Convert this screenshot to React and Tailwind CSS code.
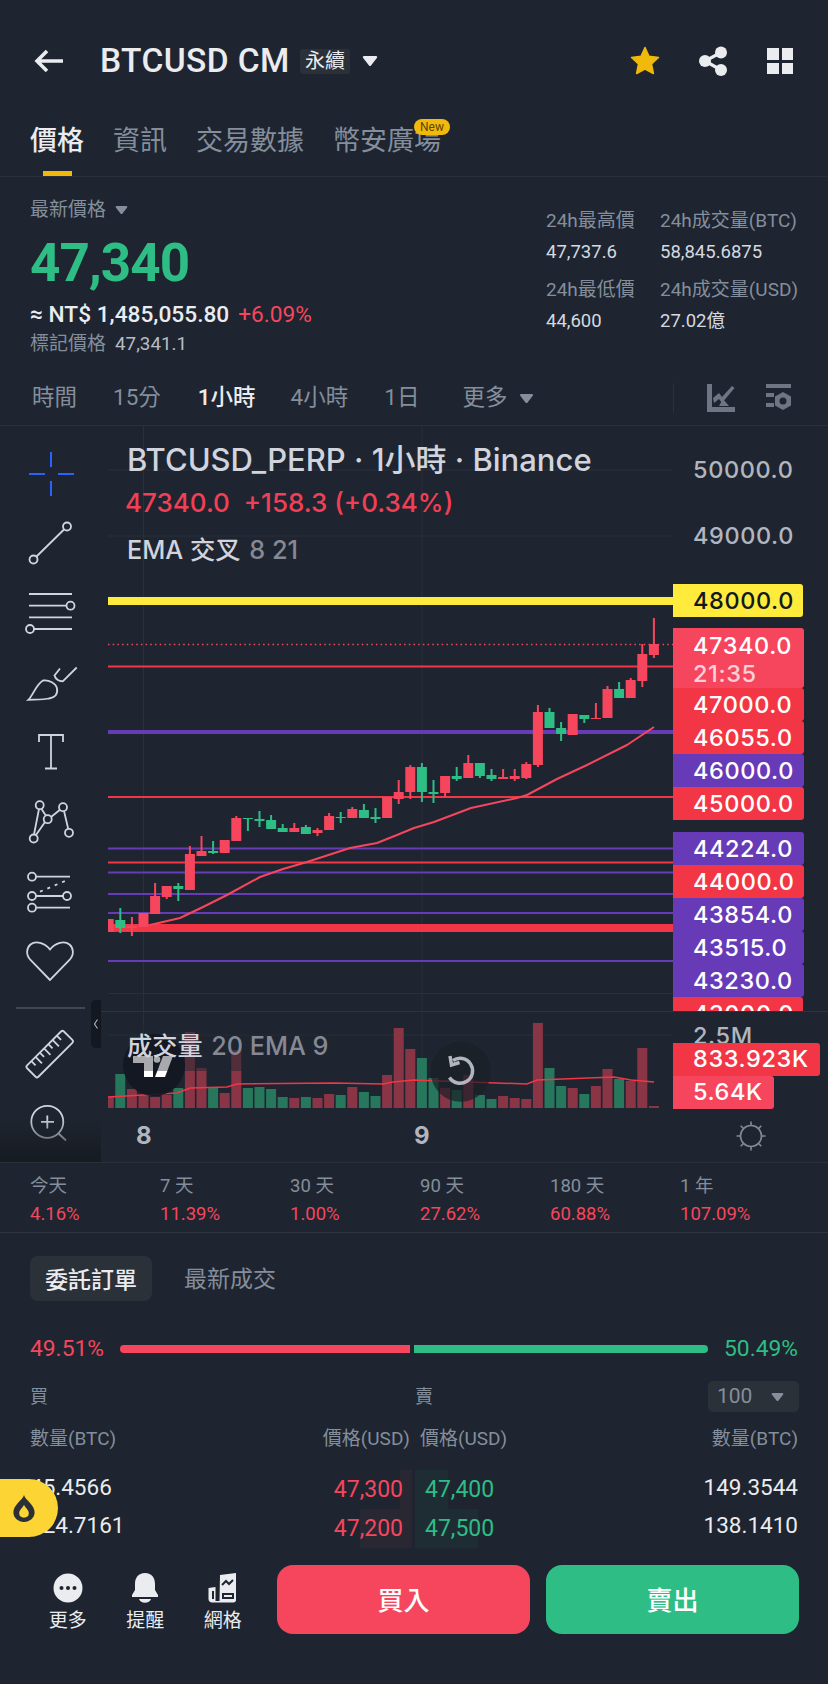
import React from 'react';

const RED = '#f6465d';
const GREEN = '#2ebd85';
const LINE_RED = '#f23645';
const PURPLE = '#673ab7';

// [colour, bodyTop, bodyBottom, wickTop, wickBottom, volumeTop]
const candles = [
    ['r', 919, 932, 919, 932, 1097],
    ['g', 920, 928, 908, 933, 1074],
    ['r', 926, 928, 917, 936, 1089],
    ['r', 913, 927, 913, 927, 1095],
    ['r', 896, 914, 883, 914, 1097],
    ['r', 886, 897, 886, 899, 1095],
    ['g', 886, 889, 883, 901, 1088],
    ['r', 854, 890, 846, 890, 1032],
    ['r', 851, 856, 836, 856, 1068],
    ['g', 851, 853, 841, 854, 1088],
    ['r', 840, 853, 840, 853, 1093],
    ['r', 818, 841, 816, 841, 1050],
    ['g', 818, 819, 818, 831, 1088],
    ['g', 819, 821, 811, 827, 1087],
    ['g', 820, 829, 815, 829, 1089],
    ['g', 828, 832, 824, 832, 1097],
    ['r', 828, 832, 823, 832, 1098],
    ['g', 827, 834, 825, 834, 1097],
    ['r', 830, 833, 828, 836, 1098],
    ['r', 816, 830, 813, 830, 1094],
    ['g', 817, 818, 812, 823, 1095],
    ['r', 809, 818, 807, 818, 1087],
    ['g', 810, 818, 804, 818, 1092],
    ['g', 817, 819, 808, 823, 1096],
    ['r', 797, 818, 797, 818, 1075],
    ['r', 792, 799, 780, 804, 1028],
    ['r', 767, 792, 765, 799, 1049],
    ['g', 767, 792, 763, 802, 1058],
    ['g', 792, 794, 780, 803, 1078],
    ['r', 776, 793, 776, 797, 1088],
    ['g', 776, 779, 767, 781, 1090],
    ['r', 763, 778, 755, 778, 1075],
    ['g', 763, 776, 763, 778, 1095],
    ['g', 775, 779, 769, 781, 1099],
    ['r', 777, 779, 769, 779, 1096],
    ['r', 776, 779, 769, 781, 1098],
    ['r', 764, 778, 762, 779, 1099],
    ['r', 712, 765, 705, 767, 1023],
    ['g', 712, 728, 708, 728, 1068],
    ['g', 728, 734, 722, 741, 1086],
    ['r', 714, 735, 714, 735, 1088],
    ['g', 715, 719, 715, 723, 1094],
    ['r', 718, 719, 703, 719, 1086],
    ['r', 689, 718, 686, 718, 1069],
    ['g', 689, 698, 682, 698, 1079],
    ['r', 680, 698, 678, 698, 1081],
    ['r', 654, 681, 644, 687, 1048],
    ['r', 644, 655, 618, 658, 1106],
];

const candleX = (i) => 108.7 + i * 11.6;

const Caret = ({ className }) => (
    <svg viewBox="0 0 16 12" className={className} fill="currentColor">
        <path d="M2 1h12c1 0 1.500 1 1 1.800L9 10.500c-.5.700-1.500.700-2 0L1 2.800C.5 2 1 1 2 1z" />
    </svg>
);

const ToolIcon = ({ top, children }) => (
    <svg
        viewBox={`0 ${top} 91 69.5`}
        className="block w-[91px] h-[69.5px]"
        fill="none"
        stroke="#d1d4dc"
        strokeWidth="1.800"
    >
        {children}
    </svg>
);

const Sidebar = () => (
    <div className="relative w-[101px] shrink-0 pt-[13px]">
        <ToolIcon top={439}>
            <path d="M51 452v15M51 481v15M29 474h16M58 474h16" stroke="#2962ff" strokeWidth="2" />
        </ToolIcon>
        <ToolIcon top={508.5}>
            <circle cx="33.500" cy="559" r="4" />
            <circle cx="67" cy="526" r="4" />
            <path d="M36.500 556L64 529" />
        </ToolIcon>
        <ToolIcon top={578}>
            <path d="M29 594h43M29 605.700h37M29 617.300h43M34 629h38" />
            <circle cx="70.500" cy="605.700" r="4" />
            <circle cx="30" cy="629" r="4" />
        </ToolIcon>
        <ToolIcon top={647.500}>
            <path d="M28.300 699.300C33 695 36 684 43 680c6-1 13 3 14 8 1 6-2 9-8 10-4 1-14 1-20.700 1.300z" />
            <path d="M60 668l-5.500 7c1 4 5 6 8.500 5.700L76.700 667" />
        </ToolIcon>
        <ToolIcon top={717}>
            <path d="M39 742v-7h24v7M51 735v33M45 768.500h12" />
        </ToolIcon>
        <ToolIcon top={786.500}>
            <circle cx="39.700" cy="804.700" r="4" />
            <circle cx="63" cy="806.700" r="4" />
            <circle cx="47.700" cy="818.700" r="4" />
            <circle cx="33.700" cy="838" r="4" />
            <circle cx="69" cy="832.300" r="4" />
            <path d="M41.500 808.500L45.800 815M45 821.500L36 834.500M39 808.500L34 834M51 816.500L60 809.300M64 810.500L68.200 828.300" />
        </ToolIcon>
        <ToolIcon top={856}>
            <circle cx="32" cy="876.700" r="4" />
            <circle cx="32" cy="896" r="4" />
            <circle cx="67" cy="896" r="4" />
            <circle cx="32" cy="907.700" r="4" />
            <path d="M36 876.700h34M36 896h27M36 907.700h34" />
            <path d="M40 891.700L65 881" strokeDasharray="3 5" />
        </ToolIcon>
        <ToolIcon top={925.500}>
            <path d="M50 979.500L30.500 959.500c-5-5.500-4-12 0-15.500 5-4 14-2 19.500 5 5.500-7 14.500-9 19.500-5 4 3.500 5 10 0 15.500z" />
        </ToolIcon>
        <div className="ml-[16px] mt-[12px] w-[69px] h-[2px] bg-[#434954]" />
        <div className="mt-[10px]">
            <ToolIcon top={1020}>
                <g transform="rotate(-45 50 1055.400)">
                    <rect x="24" y="1047" width="52" height="16" rx="2" />
                    <path d="M32 1047v6M38 1047v9M44 1047v6M50 1047v9M56 1047v6M62 1047v9M68 1047v6" />
                </g>
            </ToolIcon>
            <ToolIcon top={1089.500}>
                <circle cx="47.300" cy="1122.300" r="16" />
                <path d="M41 1122.300h13M47.300 1116v13M58.500 1134L66 1141" />
            </ToolIcon>
        </div>
        <div className="absolute left-0 bottom-0 w-full h-[45px] bg-linear-to-b from-transparent to-[#171b22]" />
        <div className="absolute left-[91px] top-[574px] w-[10px] h-[48px] rounded-l-[5px] bg-[#141820] flex items-center justify-center">
            <svg viewBox="0 0 8 14" className="w-[6px] h-[12px]" fill="none" stroke="#b2b5be" strokeWidth="1.500">
                <path d="M6 1L2 7l4 6" />
            </svg>
        </div>
    </div>
);

const ChartCanvas = () => (
    <svg viewBox="101 426 572 736" className="absolute inset-0 w-[572px] h-[736px]">
        {/* grid */}
        <path d="M143.500 426V1100M422 426V1100" stroke="#2a303a" strokeWidth="1" />
        <path d="M108 470H673M108 536H673M108 993.500H673M108 1035H673" stroke="#2a303a" strokeWidth="1" />
        <path d="M101 1011.500H673" stroke="#2d333d" strokeWidth="1" />

        {/* horizontal levels */}
        <rect x="108" y="597" width="565" height="8" fill="#ffeb3b" />
        <line x1="108" y1="644.500" x2="673" y2="644.500" stroke={RED} strokeWidth="1.500" strokeDasharray="1.500 3.200" />
        <rect x="108" y="665.500" width="565" height="2" fill={LINE_RED} />
        <rect x="108" y="730" width="565" height="4" fill={PURPLE} />
        <rect x="108" y="796" width="565" height="2" fill={LINE_RED} />
        <rect x="108" y="847.500" width="565" height="2" fill={PURPLE} />
        <rect x="108" y="861.500" width="565" height="2" fill={LINE_RED} />
        <rect x="108" y="871.500" width="565" height="2" fill={PURPLE} />
        <rect x="108" y="893" width="565" height="2" fill={PURPLE} />
        <rect x="108" y="912" width="565" height="2" fill={PURPLE} />
        <rect x="108" y="924" width="565" height="8" fill={LINE_RED} />
        <rect x="108" y="960" width="565" height="2" fill={PURPLE} />

        {/* candles */}
        {candles.map(([c, top, bottom, wickTop, wickBottom], i) => {
            const x = candleX(i);
            const color = c === 'r' ? RED : GREEN;
            const left = Math.max(x - 5, 108);
            return (
                <g key={i} fill={color}>
                    {i > 0 && <rect x={x - 1} y={wickTop} width="2" height={wickBottom - wickTop} />}
                    <rect x={left} y={top} width={x + 5 - left} height={bottom - top} />
                </g>
            );
        })}

        {/* EMA */}
        <polyline
            fill="none"
            stroke={RED}
            strokeWidth="2"
            strokeLinejoin="round"
            points="150,925 180,918 203,907 227,895 260,877 283,869 307,862 350,848 377,843 397,835 414,828 434,822 471,808 517,798 527,795 557,779 587,765 627,745 654,727"
        />

        {/* volume */}
        {candles.map(([c, , , , , vol], i) => {
            const x = candleX(i);
            const left = Math.max(x - 5, 108);
            return (
                <rect
                    key={i}
                    x={left}
                    y={vol}
                    width={x + 5 - left}
                    height={1108 - vol}
                    fill={c === 'r' ? '#8a3546' : '#27775c'}
                />
            );
        })}
        <rect x="127" y="1026" width="206" height="45" fill="#1e2530" opacity="0.5" />
        <polyline
            fill="none"
            stroke={LINE_RED}
            strokeWidth="1.500"
            points="108,1097 143,1095 177,1093 190,1088 227,1087 237,1084 333,1083 383,1084 393,1082 414,1080 527,1084 537,1080 614,1077 631,1080 654,1082"
        />

        {/* floating logo + reset */}
        <circle cx="154" cy="1065" r="31" fill="#131722" opacity="0.92" />
        <defs>
            <linearGradient id="logoFill" x1="0" y1="1056" x2="0" y2="1077" gradientUnits="userSpaceOnUse">
                <stop offset="0.700" stopColor="#a8a9ad" />
                <stop offset="0.700" stopColor="#ffffff" />
            </linearGradient>
        </defs>
        <path d="M133 1056h20v21h-9v-14h-11z" fill="url(#logoFill)" />
        <circle cx="157" cy="1059.500" r="3.300" fill="#a8a9ad" />
        <path d="M163 1056h10l-8 21h-10z" fill="url(#logoFill)" />

        <circle cx="460.700" cy="1071.700" r="30" fill="#1a1f27" opacity="0.7" />
        <path
            d="M453 1060.500a12.500 12.500 0 1 1-3.500 17"
            fill="none"
            stroke="#b2b5be"
            strokeWidth="3.500"
        />
        <path d="M450 1056l1.500 9 8-2.500" fill="none" stroke="#b2b5be" strokeWidth="3.500" />
    </svg>
);

const Legend = () => (
    <>
        <div className="absolute left-[26px] top-[13px] font-['Inter','Noto_Sans_CJK_TC',sans-serif] text-[31px] leading-[42px] font-medium text-[#d1d4dc] whitespace-nowrap">
            BTCUSD_PERP · 1小時 · Binance
        </div>
        <div className="absolute left-[24px] top-[60px] font-['Inter','Noto_Sans_CJK_TC',sans-serif] text-[26px] leading-[34px] font-medium text-[#f23f55] whitespace-nowrap">
            47340.0&nbsp; +158.3 (+0.34%)
        </div>
        <div className="absolute left-[26px] top-[107px] font-['Inter','Noto_Sans_CJK_TC',sans-serif] text-[25.300px] leading-[34px] font-medium text-[#d1d4dc] whitespace-nowrap">
            EMA 交叉 <span className="text-[#868993] ml-[2px]">8 21</span>
        </div>
        <div className="absolute left-[26px] top-[603px] font-['Inter','Noto_Sans_CJK_TC',sans-serif] text-[25.200px] leading-[34px] font-medium text-[#d1d4dc] whitespace-nowrap">
            成交量 <span className="text-[#868993] ml-[2px]">20 EMA 9</span>
        </div>
        <div className="absolute left-[35px] top-[693px] font-['Inter',sans-serif] text-[24px] leading-[34px] font-bold text-[#b2b5be]">8</div>
        <div className="absolute left-[313px] top-[693px] font-['Inter',sans-serif] text-[24px] leading-[34px] font-bold text-[#b2b5be]">9</div>
    </>
);

const tag = "h-[33px] pl-[20px] flex items-center rounded-r-[3px] text-white";

const PriceAxis = () => (
    <div className="w-[155px] shrink-0 font-['Inter',sans-serif] text-[23.500px] tracking-[0.6px] font-medium">
        <div className="h-[585.500px] overflow-hidden border-b border-[#2d333d]">
            <div className="mt-[27.500px] h-[33px] pl-[20px] flex items-center text-[#b2b5be]">50000.0</div>
            <div className="mt-[32.500px] h-[33px] pl-[20px] flex items-center text-[#b2b5be]">49000.0</div>
            <div className="mt-[32.300px] w-[130px] h-[33px] pl-[20px] flex items-center rounded-r-[3px] bg-[#ffeb3b] text-[#131722]">48000.0</div>
            <div className="mt-[10.400px] w-[131px] h-[60px] pl-[20px] pt-[3px] rounded-r-[3px] bg-[#f6465d] text-white leading-[30px]">
                <div>47340.0</div>
                <div className="text-white/75 leading-[26px]">21:35</div>
            </div>
            <div className={`${tag} w-[131px] bg-[#f23645]`}>47000.0</div>
            <div className={`${tag} w-[131px] bg-[#f23645]`}>46055.0</div>
            <div className={`${tag} w-[131px] bg-[#673ab7]`}>46000.0</div>
            <div className={`${tag} w-[131px] bg-[#f23645]`}>45000.0</div>
            <div className={`${tag} w-[131px] bg-[#673ab7] mt-[12.400px]`}>44224.0</div>
            <div className={`${tag} w-[131px] bg-[#f23645]`}>44000.0</div>
            <div className={`${tag} w-[131px] bg-[#673ab7]`}>43854.0</div>
            <div className={`${tag} w-[131px] bg-[#673ab7]`}>43515.0</div>
            <div className={`${tag} w-[131px] bg-[#673ab7]`}>43230.0</div>
            <div className={`${tag} w-[130px] bg-[#f23645]`}>43000.0</div>
        </div>
        <div className="h-[31px] pl-[20px] pt-[7px] leading-[33px] overflow-hidden text-[#b2b5be]">2.5M</div>
        <div className={`${tag} w-[147px] bg-[#f23645]`}>833.923K</div>
        <div className={`${tag} w-[101px] bg-[#f6465d]`}>5.64K</div>
        <div className="h-[54px] pl-[62px] pt-[11px]">
            <svg viewBox="0 0 32 32" className="w-[32px] h-[32px]" fill="none" stroke="#868993" strokeWidth="1.600">
                <circle cx="16" cy="16" r="10.500" />
                <path d="M16 1.500v4M16 26.500v4M1.500 16h4M26.500 16h4M5.700 5.700l3 3M23.300 23.300l3 3M5.700 26.300l3-3M23.300 8.700l3-3" />
            </svg>
        </div>
    </div>
);

const stats = [
    ['今天', '4.16%'],
    ['7 天', '11.39%'],
    ['30 天', '1.00%'],
    ['90 天', '27.62%'],
    ['180 天', '60.88%'],
    ['1 年', '107.09%'],
];

const BottomItem = ({ label, children }) => (
    <div className="w-[77.500px] flex flex-col items-center pt-[8px]">
        <svg viewBox="0 0 32 30" className="w-[32px] h-[30px]" fill="#eaecef">
            {children}
        </svg>
        <div className="mt-[6px] text-[19px] leading-[24px] text-[#eaecef]">{label}</div>
    </div>
);

export default function App() {
    return (
        <div className="relative w-[828px] h-[1684px] overflow-hidden bg-[#1e2530] font-['Roboto','Noto_Sans_CJK_TC',sans-serif] text-[#eaecef]">
            {/* top bar */}
            <div className="flex items-center h-[40px] mt-[41px] pl-[34px]">
                <svg viewBox="0 0 30 24" className="w-[30px] h-[24px]" fill="none" stroke="#eaecef" strokeWidth="3.600">
                    <path d="M29 12H3M13 2L3 12l10 10" />
                </svg>
                <div className="ml-[36px] w-[190px] text-[33.500px] leading-[40px] font-medium tracking-[0.4px] whitespace-nowrap">BTCUSD CM</div>
                <div className="ml-[10px] h-[25px] w-[50px] rounded-[3px] bg-[#2b3139] text-[20px] leading-[25px] text-center">永續</div>
                <Caret className="ml-[12px] w-[16px] h-[12px] text-[#eaecef]" />
                <svg viewBox="0 0 30 30" className="ml-auto w-[30px] h-[30px]">
                    <path
                        d="M15 1.500l4 8.800 9.500 1.200-7 6.500 1.900 9.500L15 23l-8.400 4.500L8.500 18l-7-6.500L11 10.300z"
                        fill="#f0b90b"
                        stroke="#f0b90b"
                        strokeWidth="1.500"
                        strokeLinejoin="round"
                    />
                </svg>
                <svg viewBox="0 0 30 30" className="ml-[38px] w-[30px] h-[30px]" fill="#eaecef">
                    <circle cx="23" cy="6.500" r="6" />
                    <circle cx="7" cy="15" r="6" />
                    <circle cx="23" cy="24" r="6" />
                    <path d="M23 6.500L7 15l16 9" fill="none" stroke="#eaecef" strokeWidth="3.200" />
                </svg>
                <div className="ml-[39px] mr-[35px] grid grid-cols-2 gap-[3px] w-[26px]">
                    <div className="h-[11.500px] bg-[#eaecef]" />
                    <div className="h-[11.500px] bg-[#eaecef]" />
                    <div className="h-[11.500px] bg-[#eaecef]" />
                    <div className="h-[11.500px] bg-[#eaecef]" />
                </div>
            </div>

            {/* tabs */}
            <div className="flex gap-[29px] px-[30px] border-b border-[#2a303a]">
                <div className="mt-[42px] flex flex-col items-center">
                    <div className="text-[27px] leading-[36px] font-medium">價格</div>
                    <div className="mt-[12px] w-[29px] h-[5px] bg-[#f0b90b]" />
                </div>
                <div className="mt-[42px] text-[27px] leading-[36px] text-[#848e9c]">資訊</div>
                <div className="mt-[42px] text-[27px] leading-[36px] text-[#848e9c]">交易數據</div>
                <div className="relative mt-[42px] h-[36px] text-[27px] leading-[36px] text-[#848e9c]">
                    幣安廣場
                    <div className="absolute right-[-9px] top-[-4px] w-[36px] h-[16px] rounded-full bg-[#f0b90b] text-[12px] leading-[16px] text-center text-[#5c4508]">New</div>
                </div>
            </div>

            {/* price summary */}
            <div className="flex h-[196px] pl-[30px]">
                <div>
                    <div className="flex items-center mt-[20px] h-[26px]">
                        <span className="text-[19px] leading-[26px] text-[#848e9c]">最新價格</span>
                        <Caret className="ml-[9px] w-[13px] h-[10px] text-[#848e9c]" />
                    </div>
                    <div className="mt-[10px] text-[53px] leading-[60px] font-bold text-[#2ebd85] tracking-[-1px]">47,340</div>
                    <div className="flex items-center mt-[8px] h-[28px]">
                        <span className="text-[22.700px] font-medium">≈ NT$ 1,485,055.80</span>
                        <span className="ml-[9px] text-[22.700px] text-[#f6465d]">+6.09%</span>
                    </div>
                    <div className="flex items-center mt-[3px] h-[24px]">
                        <span className="text-[19px] text-[#848e9c]">標記價格</span>
                        <span className="ml-[9px] text-[18.800px] text-[#b7bdc6]">47,341.1</span>
                    </div>
                </div>
                <div className="ml-auto w-[282px] pt-[32px] grid grid-cols-[114px_1fr] text-[19px] leading-[24px] text-[#848e9c] auto-rows-[24px] gap-y-[7px]">
                    <div>24h最高價</div>
                    <div>24h成交量(BTC)</div>
                    <div className="text-[18.500px] text-[#d5d9e0]">47,737.6</div>
                    <div className="text-[18.500px] text-[#d5d9e0]">58,845.6875</div>
                    <div className="mt-[7px]">24h最低價</div>
                    <div className="mt-[7px]">24h成交量(USD)</div>
                    <div className="mt-[7px] text-[18.500px] text-[#d5d9e0]">44,600</div>
                    <div className="mt-[7px] text-[18.500px] text-[#d5d9e0]">27.02億</div>
                </div>
            </div>

            {/* interval row */}
            <div className="flex items-center h-[50px] mb-[2px] pl-[32px] text-[22.500px] text-[#848e9c]">
                <span>時間</span>
                <span className="ml-[36px]">15分</span>
                <span className="ml-[37px] text-[#eaecef] font-medium">1小時</span>
                <span className="ml-[35px]">4小時</span>
                <span className="ml-[36px]">1日</span>
                <span className="ml-[43px]">更多</span>
                <Caret className="ml-[12px] w-[15px] h-[11px] text-[#848e9c]" />
                <div className="ml-auto w-[1px] h-[30px] bg-[#2b3139]" />
                <svg viewBox="0 0 28 28" className="ml-[33px] w-[28px] h-[28px]" fill="#6e7583">
                    <path d="M0 0h5v23h23v5H0z" />
                    <path d="M6 14l6-5 3 4 10-11 2.500 2L15 19l-3-4-5 4z" />
                    <path d="M12 22l4-7 6 7z" />
                </svg>
                <svg viewBox="0 0 26 28" className="ml-[31px] mr-[36px] w-[26px] h-[28px]" fill="#6e7583" fillRule="evenodd">
                    <path d="M0 0h25v4H0zM0 9h8v4H0zM0 19h8v4H0z" />
                    <path d="M17 8l8 4.500v9L17 26l-8-4.500v-9zM17 13.500a3.500 3.500 0 1 0 0 7 3.500 3.500 0 0 0 0-7z" />
                </svg>
            </div>

            {/* chart */}
            <div className="flex h-[738px] border-t border-b border-[#2a303a] box-border">
                <Sidebar />
                <div className="relative w-[572px] shrink-0">
                    <ChartCanvas />
                    <Legend />
                </div>
                <PriceAxis />
            </div>

            {/* period returns */}
            <div className="grid grid-cols-[repeat(6,130px)] h-[70px] pl-[30px] pt-[11px] border-b border-[#2f3541] text-[18.500px] leading-[24px]">
                {stats.map(([label, value]) => (
                    <div key={label}>
                        <div className="text-[#848e9c]">{label}</div>
                        <div className="mt-[4px] text-[#f6465d]">{value}</div>
                    </div>
                ))}
            </div>

            {/* order book */}
            <div className="flex items-center gap-[17px] mt-[23px] ml-[30px] h-[45px]">
                <div className="h-[45px] px-[15px] pt-[2px] rounded-[8px] bg-[#2b3139] text-[23px] leading-[45px] font-medium">委託訂單</div>
                <div className="px-[15px] pt-[4px] text-[23px] text-[#848e9c]">最新成交</div>
            </div>

            <div className="flex items-center mt-[33px] h-[30px] px-[30px] text-[22.800px]">
                <span className="w-[74px] text-[#f6465d]">49.51%</span>
                <div className="ml-[16px] w-[290px] h-[8px] rounded-l-full bg-[#f6465d]" />
                <div className="ml-[4px] w-[295px] h-[8px] rounded-r-full bg-[#2ebd85]" />
                <span className="ml-[16px] text-[#2ebd85]">50.49%</span>
            </div>

            <div className="flex items-center mt-[17px] h-[31px] pl-[30px] pr-[29px] text-[18px] text-[#848e9c]">
                <div className="w-[385px]">買</div>
                <div>賣</div>
                <div className="ml-auto w-[91px] h-[31px] rounded-[5px] bg-[#2b3139] flex items-center pl-[9px] text-[21px]">
                    100
                    <Caret className="ml-[19px] w-[13px] h-[10px] text-[#848e9c]" />
                </div>
            </div>

            <div className="flex items-center justify-between mt-[15px] h-[24px] px-[30px] text-[19px] text-[#848e9c]">
                <div className="flex w-[380px] justify-between">
                    <span>數量(BTC)</span>
                    <span>價格(USD)</span>
                </div>
                <div className="flex w-[378px] justify-between">
                    <span>價格(USD)</span>
                    <span>數量(BTC)</span>
                </div>
            </div>

            <div className="mt-[19px] text-[22.500px] leading-[39px]">
                <div className="flex h-[39px]">
                    <div className="relative w-[415px] pl-[30px] pr-[12px] flex justify-between">
                        <div className="absolute right-[3px] inset-y-0 w-[12px] bg-[#f6465d]/5" />
                        <span className="leading-[34px]">45.4566</span>
                        <span className="relative text-[23px] text-[#f6465d]">47,300</span>
                    </div>
                    <div className="relative flex-1 pl-[10px] pr-[30px] flex justify-between">
                        <div className="absolute left-0 inset-y-0 w-[33px] bg-[#2ebd85]/5" />
                        <span className="relative text-[23px] text-[#2ebd85]">47,400</span>
                        <span className="leading-[34px]">149.3544</span>
                    </div>
                </div>
                <div className="flex h-[39px]">
                    <div className="relative w-[415px] pl-[30px] pr-[12px] flex justify-between">
                        <div className="absolute right-[3px] inset-y-0 w-[52px] bg-[#f6465d]/5" />
                        <span className="leading-[32px]">124.7161</span>
                        <span className="relative text-[23px] text-[#f6465d]">47,200</span>
                    </div>
                    <div className="relative flex-1 pl-[10px] pr-[30px] flex justify-between">
                        <div className="absolute left-0 inset-y-0 w-[63px] bg-[#2ebd85]/5" />
                        <span className="relative text-[23px] text-[#2ebd85]">47,500</span>
                        <span className="leading-[32px]">138.1410</span>
                    </div>
                </div>
            </div>

            {/* action bar */}
            <div className="flex mt-[17px] pl-[29px]">
                <BottomItem label="更多">
                    <circle cx="16" cy="15" r="14.500" />
                    <circle cx="9.500" cy="15" r="2" fill="#1e2530" />
                    <circle cx="16" cy="15" r="2" fill="#1e2530" />
                    <circle cx="22.500" cy="15" r="2" fill="#1e2530" />
                </BottomItem>
                <BottomItem label="提醒">
                    <path d="M16 0c7 0 10 5 10 11v6l3 5v2H3v-2l3-5v-6C6 5 9 0 16 0z" />
                    <path d="M10 26h12c-1 2.500-3 3.800-6 3.800s-5-1.300-6-3.800z" />
                </BottomItem>
                <BottomItem label="網格">
                    <path d="M13 2l16-2v27c0 1.500-1 2.500-2.500 2.500H5c-2 0-3.500-1.500-3.500-3.500V15l7-1v14h4z" />
                    <path d="M15 12l4-4 3 3 4-4M16 21h10v4H16z" fill="none" stroke="#1e2530" strokeWidth="2" />
                    <path d="M5 18h2v8H5z" fill="#1e2530" />
                </BottomItem>
                <button className="ml-[15.500px] w-[253px] h-[69px] pt-[3px] rounded-[16px] bg-[#f6465d] text-[26px] font-medium text-white">買入</button>
                <button className="ml-[16px] w-[253px] h-[69px] pt-[3px] rounded-[16px] bg-[#2ebd85] text-[26px] font-medium text-white">賣出</button>
            </div>

            {/* floating badge */}
            <div className="absolute left-0 top-[1479px] w-[58px] h-[58px] rounded-r-[29px] bg-[#fcd535] flex items-center justify-center pr-[10px]">
                <svg viewBox="0 0 22 28" className="w-[22px] h-[27px]" fill="#2b2f36" fillRule="evenodd">
                    <path d="M11 0c1 5 11 10 11 18 0 6-5 10-11 10S0 24 0 18C0 10 10 5 11 0zM11 10c-1 3-5 5-5 9 0 3 2 4.500 5 4.500s5-1.500 5-4.500c0-4-4-6-5-9z" />
                </svg>
            </div>
        </div>
    );
}
